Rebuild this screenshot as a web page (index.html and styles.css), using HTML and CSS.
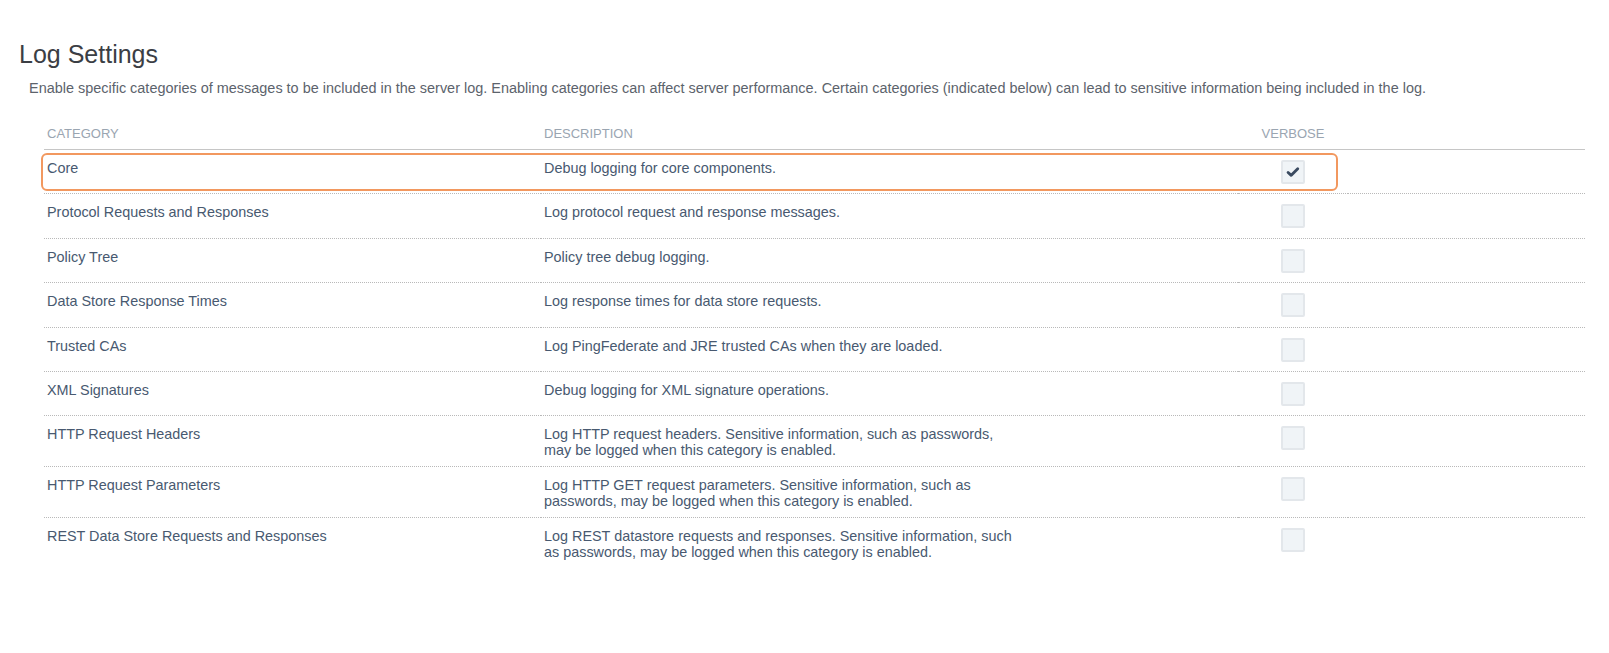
FILE: index.html
```html
<!DOCTYPE html>
<html lang="en">
<head>
    <meta charset="UTF-8">
    <meta name="viewport" content="width=device-width, initial-scale=1.0">
    <title>Log Settings</title>
    <link rel="stylesheet" href="styles.css">
</head>
<body>
    <div class="page">
        <h1 class="title">Log Settings</h1>
        <p class="intro">Enable specific categories of messages to be included in the server log. Enabling categories can affect server performance. Certain categories (indicated below) can lead to sensitive information being included in the log.</p>

        <table class="log-table">
            <colgroup>
                <col class="col-category">
                <col class="col-desc">
                <col class="col-verbose">
                <col>
            </colgroup>
            <thead>
                <tr>
                    <th>Category</th>
                    <th>Description</th>
                    <th class="center">Verbose</th>
                    <th></th>
                </tr>
            </thead>
            <tbody>
                <tr class="highlight">
                    <td>Core</td>
                    <td>Debug logging for core components.</td>
                    <td class="center"><span class="check checked">
                        <svg viewBox="0 0 16 16" width="14" height="14"><path d="M2.4 8.6 L6 11.8 L13.4 4.4" fill="none" stroke="#3a4a60" stroke-width="3.3" stroke-linecap="round" stroke-linejoin="round"/></svg>
                    </span></td>
                    <td></td>
                </tr>
                <tr>
                    <td>Protocol Requests and Responses</td>
                    <td>Log protocol request and response messages.</td>
                    <td class="center"><span class="check"></span></td>
                    <td></td>
                </tr>
                <tr>
                    <td>Policy Tree</td>
                    <td>Policy tree debug logging.</td>
                    <td class="center"><span class="check"></span></td>
                    <td></td>
                </tr>
                <tr>
                    <td>Data Store Response Times</td>
                    <td>Log response times for data store requests.</td>
                    <td class="center"><span class="check"></span></td>
                    <td></td>
                </tr>
                <tr>
                    <td>Trusted CAs</td>
                    <td>Log PingFederate and JRE trusted CAs when they are loaded.</td>
                    <td class="center"><span class="check"></span></td>
                    <td></td>
                </tr>
                <tr>
                    <td>XML Signatures</td>
                    <td>Debug logging for XML signature operations.</td>
                    <td class="center"><span class="check"></span></td>
                    <td></td>
                </tr>
                <tr>
                    <td>HTTP Request Headers</td>
                    <td><div class="desc">Log HTTP request headers. Sensitive information, such as passwords, may be logged when this category is enabled.</div></td>
                    <td class="center"><span class="check"></span></td>
                    <td></td>
                </tr>
                <tr>
                    <td>HTTP Request Parameters</td>
                    <td><div class="desc">Log HTTP GET request parameters. Sensitive information, such as passwords, may be logged when this category is enabled.</div></td>
                    <td class="center"><span class="check"></span></td>
                    <td></td>
                </tr>
                <tr class="last">
                    <td>REST Data Store Requests and Responses</td>
                    <td><div class="desc">Log REST datastore requests and responses. Sensitive information, such as passwords, may be logged when this category is enabled.</div></td>
                    <td class="center"><span class="check"></span></td>
                    <td></td>
                </tr>
            </tbody>
        </table>
    </div>
</body>
</html>
```

FILE: styles.css
```css
body {
    margin: 0;
    background: #fff;
    font-family: "Liberation Sans", Arial, sans-serif;
    color: #485970;
}
.page {
    padding: 40px 24px 0 19px;
}
.title {
    margin: 0;
    font-size: 25px;
    line-height: 28px;
    font-weight: normal;
    color: #3b3e44;
}
.intro {
    margin: 12px 0 0 10px;
    font-size: 14.45px;
    line-height: 16px;
    color: #5c636c;
}
.log-table {
    margin: 30px 0 0 25px;
    width: calc(100% - 25px);
    border-collapse: collapse;
    table-layout: fixed;
    font-size: 14.4px;
    line-height: 16px;
}
.col-category { width: 497px; }
.col-desc { width: 697px; }
.col-verbose { width: 110px; }
.log-table th {
    text-align: left;
    font-weight: normal;
    font-size: 13px;
    text-transform: uppercase;
    color: #9aa5b1;
    padding: 0 3px 7px;
    border-bottom: 1px solid #c6c6c6;
}
.log-table td {
    vertical-align: top;
    padding: 10px 3px 8px;
    border-bottom: 1px dotted #b9b9b9;
}
.log-table td.center {
    padding-bottom: 9.4px;
}
.log-table tr.last td {
    border-bottom: none;
}
.log-table .center {
    text-align: center;
}
.desc {
    max-width: 476px;
}
.check {
    display: inline-block;
    box-sizing: border-box;
    width: 24px;
    height: 24px;
    border: 2px solid #e3e7eb;
    border-radius: 2px;
    background: #f0f4f7;
    vertical-align: top;
    position: relative;
}
.check svg {
    position: absolute;
    left: 3px;
    top: 3px;
}
.highlight td:first-child {
    position: relative;
}
.highlight td:first-child::after {
    content: "";
    position: absolute;
    left: -3px;
    top: 3px;
    width: 1297px;
    height: 38px;
    box-sizing: border-box;
    border: 2px solid #f2985f;
    border-radius: 6px;
    pointer-events: none;
}
```
